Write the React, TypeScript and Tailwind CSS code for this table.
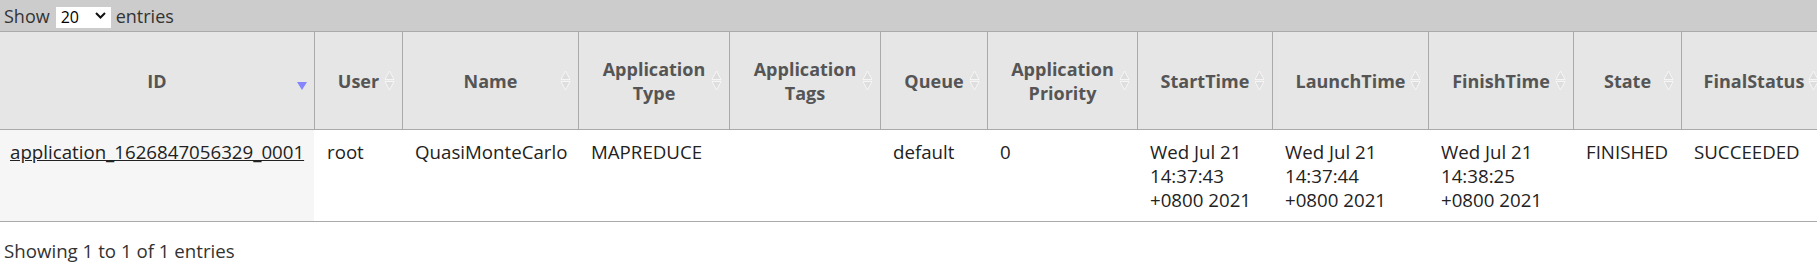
type Column = {
  label: string;
  sorted?: boolean;
};

const columns: Column[] = [
  { label: "ID", sorted: true },
  { label: "User" },
  { label: "Name" },
  { label: "Application Type" },
  { label: "Application Tags" },
  { label: "Queue" },
  { label: "Application Priority" },
  { label: "StartTime" },
  { label: "LaunchTime" },
  { label: "FinishTime" },
  { label: "State" },
  { label: "FinalStatus" },
];

const gridCols =
  "grid grid-cols-[314px_88px_176px_151px_151px_107px_150px_135px_156px_145px_108px_145px]";

function SortBoth() {
  return (
    <svg width="11" height="21" viewBox="0 0 11 21" className="absolute right-[7px] top-[38px]">
      <polygon points="5.5,1 10,9.5 1,9.5" fill="#dedede" stroke="#f6f6f6" strokeWidth="1" />
      <polygon points="1,11.5 10,11.5 5.5,20" fill="#dedede" stroke="#f6f6f6" strokeWidth="1" />
    </svg>
  );
}

function SortDesc() {
  return (
    <svg width="10" height="8" viewBox="0 0 10 8" className="absolute right-[7px] top-[50px]">
      <polygon points="0,0 10,0 5,8" fill="#8585ff" />
    </svg>
  );
}

function TimeCell({ lines }: { lines: string[] }) {
  return (
    <div className="pl-[13px] pt-[10px]">
      {lines.map((line) => (
        <div key={line}>{line}</div>
      ))}
    </div>
  );
}

export default function App() {
  return (
    <div className="w-full overflow-hidden bg-white font-['Open_Sans',sans-serif] leading-[24px] text-[#222]">
      <div className="flex h-[31px] items-center bg-[#cccccc] pl-[4px] text-[18px] text-[#333]">
        <span>Show</span>
        <span className="relative ml-[6px] mr-[5px] inline-block">
          <select
            defaultValue="20"
            className="h-[21px] w-[55px] appearance-none bg-white pl-[5px] text-[16px] leading-[21px] text-black outline-none"
          >
            <option value="10">10</option>
            <option value="20">20</option>
            <option value="50">50</option>
            <option value="100">100</option>
          </select>
          <svg
            width="11"
            height="7"
            viewBox="0 0 11 7"
            className="pointer-events-none absolute right-[5px] top-[8px]"
          >
            <path d="M1 1 L5.5 5.5 L10 1" fill="none" stroke="#111" strokeWidth="2" />
          </svg>
        </span>
        <span>entries</span>
      </div>

      <div className="w-[1826px]">
        <div className={`${gridCols} border-y border-[#aaaaaa] bg-[#e6e6e6]`}>
          {columns.map((col, i) => (
            <div
              key={col.label}
              className={`relative flex h-[97px] items-center justify-center px-[18px] text-center text-[18px] font-bold text-[#555] ${
                i > 0 ? "border-l border-[#aaaaaa]" : ""
              }`}
            >
              {col.label}
              {col.sorted ? <SortDesc /> : <SortBoth />}
            </div>
          ))}
        </div>

        <div className={`${gridCols} h-[92px] border-b border-[#aaaaaa] text-[18.7px]`}>
          <div className="bg-[#f6f6f6] pl-[10px] pt-[10px]">
            <a href="#" className="text-[#222] underline">
              application_1626847056329_0001
            </a>
          </div>
          <div className="pl-[13px] pt-[10px]">root</div>
          <div className="pl-[13px] pt-[10px]">QuasiMonteCarlo</div>
          <div className="pl-[13px] pt-[10px]">MAPREDUCE</div>
          <div className="pl-[13px] pt-[10px]"></div>
          <div className="pl-[13px] pt-[10px]">default</div>
          <div className="pl-[13px] pt-[10px]">0</div>
          <TimeCell lines={["Wed Jul 21", "14:37:43", "+0800 2021"]} />
          <TimeCell lines={["Wed Jul 21", "14:37:44", "+0800 2021"]} />
          <TimeCell lines={["Wed Jul 21", "14:38:25", "+0800 2021"]} />
          <div className="pl-[13px] pt-[10px]">FINISHED</div>
          <div className="pl-[13px] pt-[10px]">SUCCEEDED</div>
        </div>
      </div>

      <div className="mt-[17px] pb-[6px] pl-[4px] text-[18.7px] text-[#333]">
        Showing 1 to 1 of 1 entries
      </div>
    </div>
  );
}
